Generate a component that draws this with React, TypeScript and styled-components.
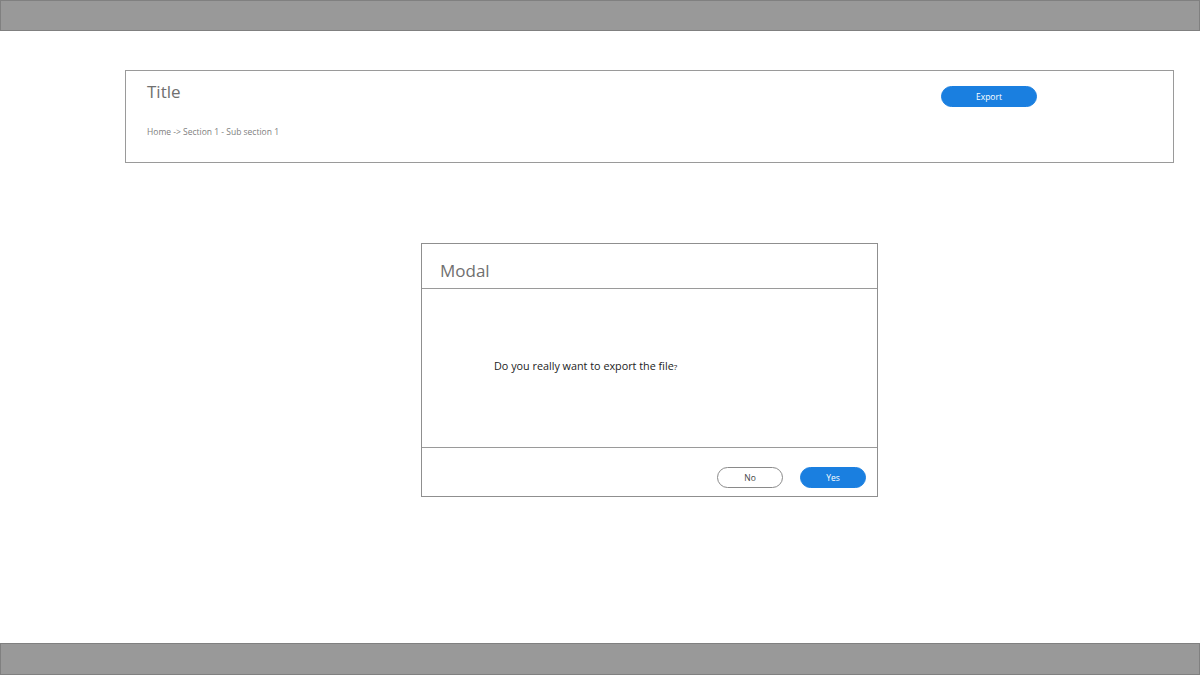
import React from 'react'
import styled, { createGlobalStyle } from 'styled-components'

const GlobalStyle = createGlobalStyle`
  html, body {
    margin      : 0;
    padding     : 0;
    background  : #fff;
    font-family : "Open Sans", "Noto Sans", sans-serif;
  }
`

const Page = styled.div`
  display        : flex;
  flex-direction : column;
  width          : 1200px;
  height         : 675px;
  overflow       : hidden;
`

const Bar = styled.div<{ $bottom?: boolean }>`
  flex       : 0 0 auto;
  box-sizing : border-box;
  background : #999999;
  border     : 1px solid #808080;
  margin-top : ${p => (p.$bottom ? 'auto' : '0')};
  height     : ${p => (p.$bottom ? '32px' : '31px')};
`

const HeaderCard = styled.div`
  box-sizing      : border-box;
  margin          : 39px 0 0 125px;
  width           : 1049px;
  height          : 93px;
  border          : 1px solid #9a9a9a;
  padding         : 10px 0 0 21px;
  display         : flex;
  justify-content : space-between;
  align-items     : flex-start;
`

const TitleBlock = styled.div`
  display        : flex;
  flex-direction : column;
`

const Title = styled.h1`
  margin      : 0;
  font-size   : 17px;
  font-weight : 400;
  line-height : 22px;
  color       : #707070;
`

const Breadcrumb = styled.div`
  margin-top : 23px;
  font-size  : 8.5px;
  color      : #808080;
`

const Pill = styled.button<{ $primary?: boolean; $width?: number }>`
  box-sizing    : border-box;
  width         : ${p => p.$width ?? 66}px;
  height        : 21px;
  border-radius : 11px;
  border        : 1px solid ${p => (p.$primary ? '#1a7fe0' : '#8a8a8a')};
  background    : ${p => (p.$primary ? '#1a7fe0' : '#fff')};
  color         : ${p => (p.$primary ? '#fff' : '#444')};
  font-family   : "Open Sans", "Noto Sans", sans-serif;
  font-size     : 8.5px;
  padding       : 0;
  cursor        : pointer;
`

const ExportButton = styled(Pill)`
  margin : 5px 136px 0 0;
`

const Modal = styled.div`
  box-sizing     : border-box;
  margin         : 80px 0 0 421px;
  width          : 457px;
  height         : 254px;
  border         : 1px solid #8f8f8f;
  display        : flex;
  flex-direction : column;
`

const ModalHeader = styled.div`
  flex          : 0 0 45px;
  box-sizing    : border-box;
  border-bottom : 1px solid #9a9a9a;
  padding       : 16px 0 0 18px;
  font-size     : 17px;
  color         : #707070;
  line-height   : 22px;
`

const ModalBody = styled.div`
  flex          : 0 0 159px;
  box-sizing    : border-box;
  border-bottom : 1px solid #9a9a9a;
  padding       : 69px 0 0 72px;
  font-size     : 10.8px;
  color         : #222;
`

const Small = styled.span`
  font-size : 8px;
`

const ModalFooter = styled.div`
  flex            : 1;
  display         : flex;
  justify-content : flex-end;
  align-items     : flex-start;
  gap             : 17px;
  padding         : 19px 11px 0 0;
`

export default function App() {
  return (
    <Page>
      <GlobalStyle />
      <Bar />
      <HeaderCard>
        <TitleBlock>
          <Title>Title</Title>
          <Breadcrumb>Home -&gt; Section 1 - Sub section 1</Breadcrumb>
        </TitleBlock>
        <ExportButton $primary $width={96}>Export</ExportButton>
      </HeaderCard>
      <Modal>
        <ModalHeader>Modal</ModalHeader>
        <ModalBody>
          Do you really want to export the file<Small>?</Small>
        </ModalBody>
        <ModalFooter>
          <Pill>No</Pill>
          <Pill $primary>Yes</Pill>
        </ModalFooter>
      </Modal>
      <Bar $bottom />
    </Page>
  )
}
